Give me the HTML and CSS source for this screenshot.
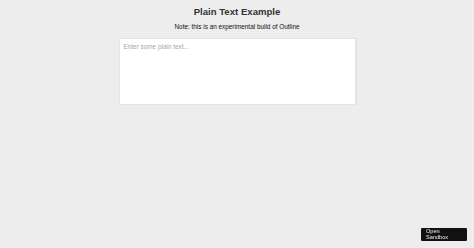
FILE: index.html
```html
<!DOCTYPE html>
<html>
<head>
<meta charset="utf-8">
<title>Plain Text Example</title>
<link rel="stylesheet" href="styles.css">
</head>
<body>
<main class="page">
  <h1 class="title">Plain Text Example</h1>
  <p class="note">Note: this is an experimental build of Outline</p>
  <div class="editor">
    <div class="placeholder">Enter some plain text...</div>
  </div>
</main>
<a class="sandbox" href="#"><span class="sandbox-label">Open Sandbox</span></a>
</body>
</html>
```
FILE: styles.css
```css
html, body {
  margin: 0;
  padding: 0;
  background: #ededed;
  font-family: "Liberation Sans", Arial, sans-serif;
}
.page {
  display: flex;
  flex-direction: column;
  align-items: center;
  padding-top: 6px;
}
.title {
  margin: 0;
  font-size: 9.6px;
  line-height: 12px;
  font-weight: bold;
  color: #333;
}
.note {
  margin: 5px 0 0;
  font-size: 6.4px;
  line-height: 8px;
  color: #111;
}
.editor {
  margin-top: 7px;
  width: 237px;
  height: 67px;
  background: #fff;
  border: 1px solid #e4e4e4;
  box-shadow: 1px 1px 2px rgba(0, 0, 0, 0.04);
  padding: 4px;
  box-sizing: border-box;
}
.placeholder {
  font-size: 6.4px;
  line-height: 8px;
  color: #a8a8a8;
}
.sandbox {
  position: fixed;
  right: 7px;
  bottom: 7px;
  width: 46px;
  height: 13px;
  box-sizing: border-box;
  padding: 1px 0 0 5px;
  background: #111;
  color: #f0f0f0;
  font-size: 5.6px;
  line-height: 5.8px;
  text-decoration: none;
  border-radius: 1px;
}
.sandbox-label {
  display: block;
  width: 32px;
}
```
